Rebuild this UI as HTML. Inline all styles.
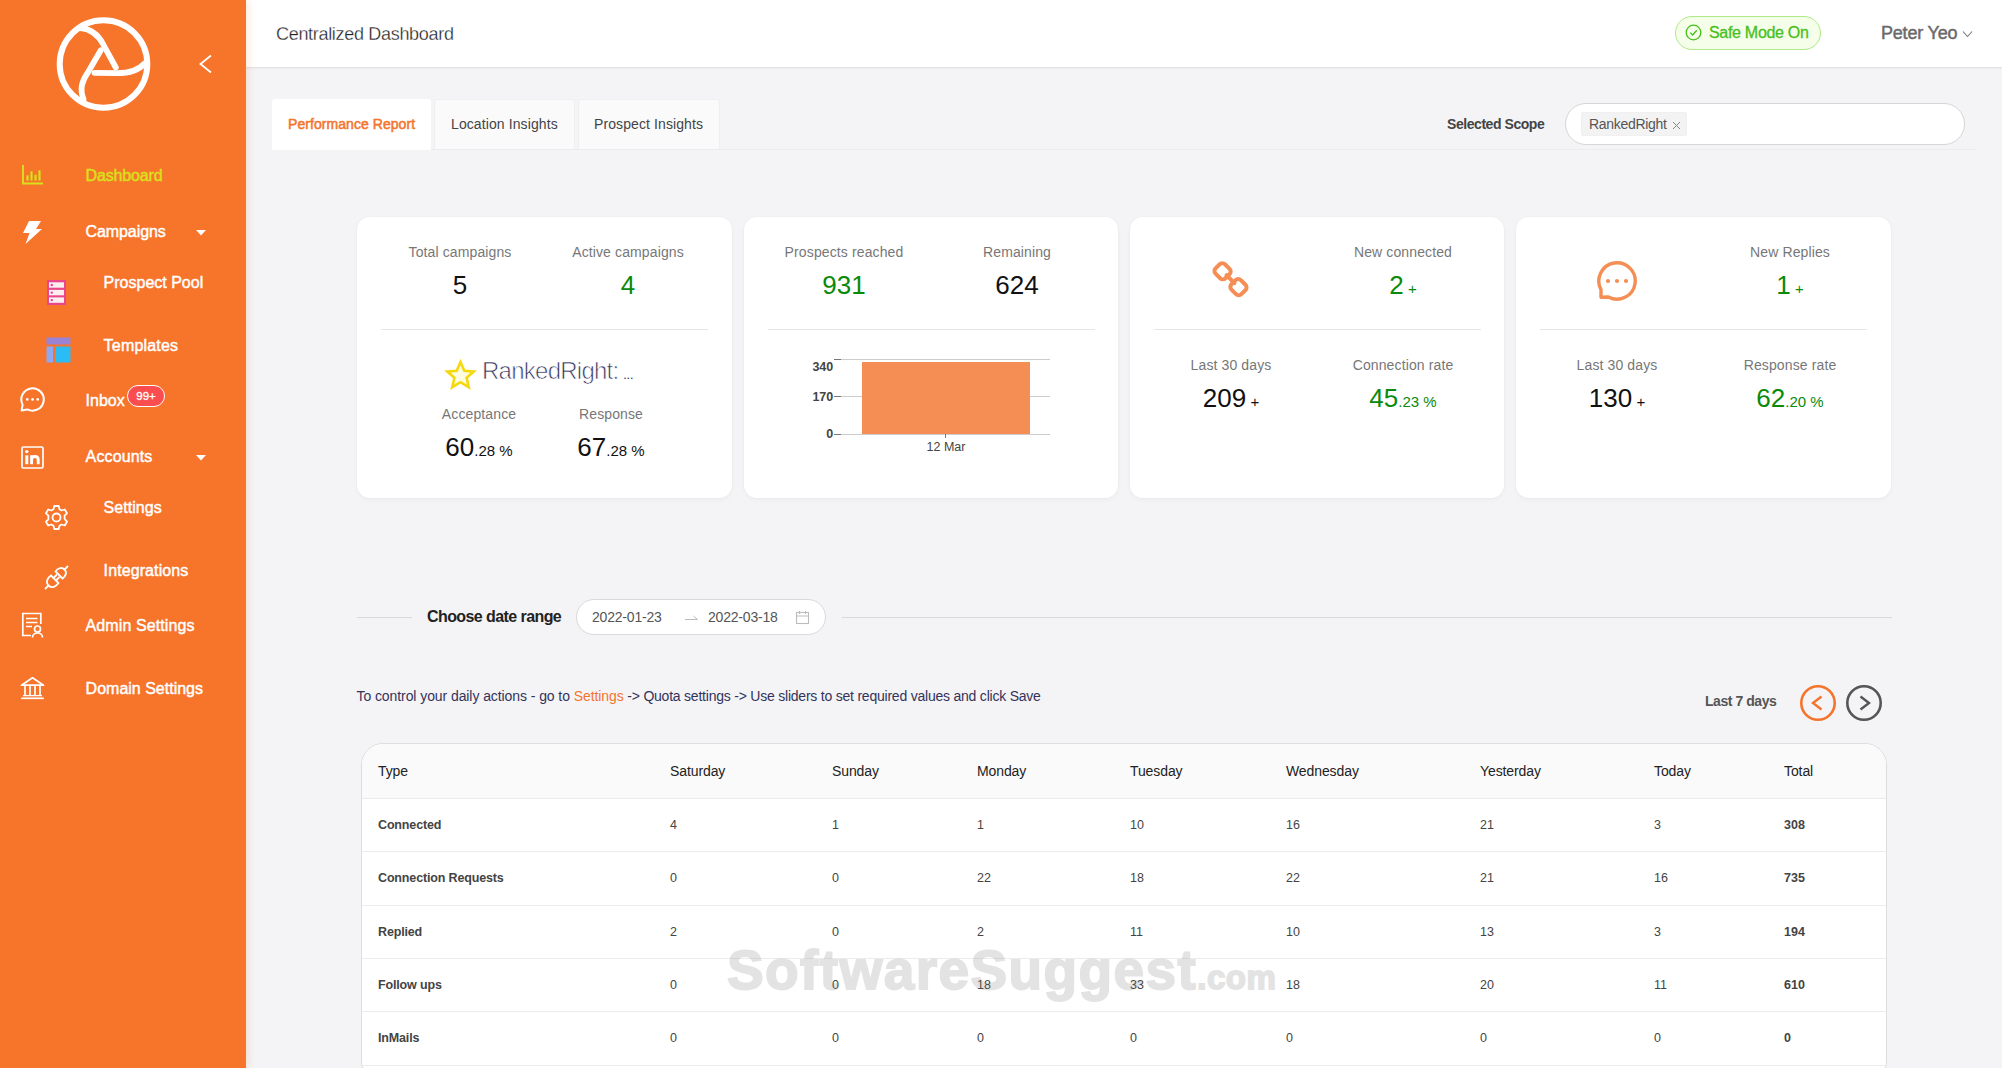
<!DOCTYPE html>
<html><head><meta charset="utf-8">
<style>
*{box-sizing:border-box;margin:0;padding:0}
html,body{width:2002px;height:1068px;overflow:hidden;background:#f4f4f7;font-family:"Liberation Sans",sans-serif;}
.abs{position:absolute}
#side{position:absolute;left:0;top:0;width:246px;height:1068px;background:#f7742b;box-shadow:2px 0 8px rgba(247,116,43,.18);z-index:5}
#top{position:absolute;left:246px;top:0;width:1756px;height:68px;background:#fff;border-bottom:1px solid #e2e2e4;box-shadow:0 1px 2px rgba(0,0,0,.04)}
.nav{position:absolute;margin-top:1px;margin-left:.6px;color:#fff;font-size:16px;white-space:nowrap;-webkit-text-stroke:.45px #fff;line-height:20px}
.t{position:absolute;white-space:nowrap;line-height:1}
.card{position:absolute;top:217px;height:281px;width:375px;background:#fff;border-radius:13px;box-shadow:0 0 0 1px rgba(0,0,0,.012),0 2px 5px rgba(0,0,0,.035)}
.lbl{position:absolute;color:#777;font-size:14px;letter-spacing:.12px;white-space:nowrap;transform:translateX(-50%);line-height:16px}
.num{position:absolute;font-size:26px;white-space:nowrap;transform:translateX(-50%);line-height:30px;color:#111}
.num small{font-size:15px}
.g{color:#0a8a0a}
.hr{position:absolute;height:1px;background:#e6e6e9}
#tbl{position:absolute;left:361px;top:743px;width:1526px;height:340px;background:#fff;border:1px solid #dddde0;border-radius:22px;overflow:hidden}
#tbl .head{position:absolute;left:0;top:0;width:100%;height:55px;background:#fafafa;border-bottom:1px solid #ebebeb}
.row{position:absolute;left:0;width:100%;height:1px;background:#ececec}
.c{position:absolute;margin-top:1px;font-size:12.5px;color:#444;white-space:nowrap;line-height:14px}
.h{position:absolute;letter-spacing:-.1px;font-size:14px;color:#222;white-space:nowrap;line-height:16px}
.b{font-weight:bold}
</style></head><body>
<div id="top"></div>
<!-- topbar content -->
<div class="t" style="left:276px;top:25px;font-size:18px;color:#222;letter-spacing:-.31px;-webkit-text-stroke:.3px #fff">Centralized Dashboard</div>
<div class="abs" style="left:1675px;top:16px;width:146px;height:34px;border-radius:17px;background:#f4fee8;border:1px solid #b0e98a"></div>
<svg class="abs" style="left:1685px;top:24px" width="17" height="17" viewBox="0 0 17 17" fill="none" stroke="#47bf1d" stroke-width="1.3"><circle cx="8.5" cy="8.5" r="7.3"/><path d="M5.2 8.6 L7.6 11 L11.8 6.2"/></svg>
<div class="t" style="left:1709px;top:25px;font-size:16px;color:#49c01c;-webkit-text-stroke:.3px #49c01c;letter-spacing:-.3px">Safe Mode On</div>
<div class="t" style="left:1881px;top:24px;font-size:18px;color:#6a6a6a;-webkit-text-stroke:.45px #6a6a6a;letter-spacing:-.2px">Peter Yeo</div>
<svg class="abs" style="left:1962px;top:30px" width="11" height="8" viewBox="0 0 11 8" fill="none" stroke="#777" stroke-width="1.1"><path d="M1 1.5 L5.5 6.5 L10 1.5"/></svg>

<!-- tabs -->
<div class="abs" style="left:272px;top:149px;width:1705px;height:1px;background:#ececef"></div>
<div class="abs" style="left:272px;top:99px;width:159px;height:51px;background:#fff;border-radius:3px 3px 0 0"></div>
<div class="abs" style="left:434px;top:99px;width:141px;height:50px;background:#fafafa;border:1px solid #efeff1;border-bottom:none;border-radius:3px 3px 0 0"></div>
<div class="abs" style="left:578px;top:99px;width:142px;height:50px;background:#fafafa;border:1px solid #efeff1;border-bottom:none;border-radius:3px 3px 0 0"></div>
<div class="t" style="left:288px;top:117px;font-size:14px;color:#f4742c;-webkit-text-stroke:.5px #f4742c;letter-spacing:.06px">Performance Report</div>
<div class="t" style="left:451px;top:117px;font-size:14px;color:#444;letter-spacing:.1px">Location Insights</div>
<div class="t" style="left:594px;top:117px;font-size:14px;color:#444;letter-spacing:.1px">Prospect Insights</div>

<!-- scope -->
<div class="t" style="left:1447px;top:117px;font-size:14px;font-weight:bold;color:#444;letter-spacing:-.44px">Selected Scope</div>
<div class="abs" style="left:1565px;top:103px;width:400px;height:42px;border-radius:21px;background:#fff;border:1px solid #d6d6d6"></div>
<div class="abs" style="left:1581px;top:112px;width:106px;height:24px;border-radius:2px;background:#f3f3f4;border:1px solid #f0f0f0"></div>
<div class="t" style="left:1589px;top:117px;font-size:14px;color:#555;letter-spacing:-.3px">RankedRight</div>
<svg class="abs" style="left:1672px;top:121px" width="9" height="9" viewBox="0 0 9 9" fill="none" stroke="#888" stroke-width="1"><path d="M1 1 L8 8 M8 1 L1 8"/></svg>

<!-- card 1 -->
<div class="card" style="left:357px"></div>
<div class="lbl" style="left:460px;top:244px">Total campaigns</div>
<div class="lbl" style="left:628px;top:244px">Active campaigns</div>
<div class="num" style="left:460px;top:270px">5</div>
<div class="num g" style="left:628px;top:270px">4</div>
<div class="hr" style="left:381px;top:329px;width:327px"></div>
<svg class="abs" style="left:443px;top:357px" width="35" height="35" viewBox="0 0 35 35" fill="#fffde0" stroke="#f6d80e" stroke-width="2.6" stroke-linejoin="miter"><path d="M17.5 5 L21.3 13.8 L30.8 14.6 L23.6 20.8 L25.8 30.2 L17.5 25.2 L9.2 30.2 L11.4 20.8 L4.2 14.6 L13.7 13.8 Z"/></svg>
<div class="t" style="left:482px;top:359px;font-size:24px;color:#34345c;letter-spacing:-.75px;-webkit-text-stroke:.7px #fff">RankedRight: <span style="font-size:12.5px;letter-spacing:-.2px;margin-left:-1px;-webkit-text-stroke:0;color:#2a2a50">...</span></div>
<div class="lbl" style="left:479px;top:406px">Acceptance</div>
<div class="lbl" style="left:611px;top:406px">Response</div>
<div class="num" style="left:479px;top:432px">60<small>.28 %</small></div>
<div class="num" style="left:611px;top:432px">67<small>.28 %</small></div>

<!-- card 2 -->
<div class="card" style="left:744px;width:374px"></div>
<div class="lbl" style="left:844px;top:244px">Prospects reached</div>
<div class="lbl" style="left:1017px;top:244px">Remaining</div>
<div class="num g" style="left:844px;top:270px">931</div>
<div class="num" style="left:1017px;top:270px">624</div>
<div class="hr" style="left:768px;top:329px;width:327px"></div>
<div class="abs" style="left:836px;top:359px;width:214px;height:1px;background:#ccc"></div>
<div class="abs" style="left:836px;top:396px;width:214px;height:1px;background:#ccc"></div>
<div class="abs" style="left:836px;top:434px;width:214px;height:1px;background:#ccc"></div>
<div class="abs" style="left:834px;top:359px;width:7px;height:1px;background:#777"></div>
<div class="abs" style="left:834px;top:396px;width:7px;height:1px;background:#777"></div>
<div class="abs" style="left:834px;top:434px;width:7px;height:1px;background:#777"></div>
<div class="abs" style="left:862px;top:362px;width:168px;height:72px;background:#f58e54"></div>
<div class="abs" style="left:945px;top:434px;width:1px;height:4px;background:#777"></div>
<div class="t b" style="left:793px;top:361px;width:40px;text-align:right;font-size:12.5px;color:#444;letter-spacing:-.1px">340</div>
<div class="t b" style="left:793px;top:391px;width:40px;text-align:right;font-size:12.5px;color:#444;letter-spacing:-.1px">170</div>
<div class="t b" style="left:793px;top:428px;width:40px;text-align:right;font-size:12.5px;color:#444;letter-spacing:-.1px">0</div>
<div class="t" style="left:906px;top:441px;width:80px;text-align:center;font-size:12.5px;color:#444">12 Mar</div>

<!-- card 3 -->
<div class="card" style="left:1130px;width:374px"></div>
<svg class="abs" style="left:1205px;top:254px" width="51" height="51" viewBox="-25.5 -25.5 51 51" fill="none" stroke="#f58e54" stroke-width="4" stroke-linecap="round"><g transform="translate(0,-.3) rotate(45)"><rect x="-18.24" y="-6.65" width="14" height="13.3" rx="3.75"/><rect x="4.24" y="-6.65" width="14" height="13.3" rx="3.75"/><path d="M-5.6 0 H5.6"/></g></svg>
<div class="lbl" style="left:1403px;top:244px">New connected</div>
<div class="num g" style="left:1403px;top:270px">2<small> +</small></div>
<div class="hr" style="left:1154px;top:329px;width:327px"></div>
<div class="lbl" style="left:1231px;top:357px">Last 30 days</div>
<div class="lbl" style="left:1403px;top:357px">Connection rate</div>
<div class="num" style="left:1231px;top:383px">209<small> +</small></div>
<div class="num g" style="left:1403px;top:383px">45<small>.23 %</small></div>

<!-- card 4 -->
<div class="card" style="left:1516px"></div>
<svg class="abs" style="left:1595px;top:260px" width="44" height="42" viewBox="0 0 44 42" fill="none" stroke="#f58e54" stroke-width="3.4" stroke-linejoin="round"><path d="M6 29.6 A18.2 18.2 0 1 1 13.4 37 L6 37.2 Z"/><circle cx="13" cy="21" r="2.1" fill="#f58e54" stroke="none"/><circle cx="22" cy="21" r="2.1" fill="#f58e54" stroke="none"/><circle cx="31" cy="21" r="2.1" fill="#f58e54" stroke="none"/></svg>
<div class="lbl" style="left:1790px;top:244px">New Replies</div>
<div class="num g" style="left:1790px;top:270px">1<small> +</small></div>
<div class="hr" style="left:1540px;top:329px;width:327px"></div>
<div class="lbl" style="left:1617px;top:357px">Last 30 days</div>
<div class="lbl" style="left:1790px;top:357px">Response rate</div>
<div class="num" style="left:1617px;top:383px">130<small> +</small></div>
<div class="num g" style="left:1790px;top:383px">62<small>.20 %</small></div>

<!-- date range -->
<div class="abs" style="left:357px;top:617px;width:55px;height:1px;background:#d9d9dc"></div>
<div class="abs" style="left:842px;top:617px;width:1050px;height:1px;background:#d9d9dc"></div>
<div class="t b" style="left:427px;top:609px;font-size:16px;color:#222;letter-spacing:-.58px">Choose date range</div>
<div class="abs" style="left:576px;top:599px;width:250px;height:36px;border-radius:18px;background:#fff;border:1px solid #d9d9d9"></div>
<div class="t" style="left:592px;top:610px;font-size:14px;color:#555;letter-spacing:-.2px">2022-01-23</div>
<div class="t" style="left:708px;top:610px;font-size:14px;color:#555;letter-spacing:-.2px">2022-03-18</div>
<svg class="abs" style="left:684px;top:613px" width="15" height="9" viewBox="0 0 15 9" fill="none" stroke="#bbb" stroke-width="1"><path d="M1 6.5 H13.5 L9.5 3"/></svg>
<svg class="abs" style="left:795px;top:610px" width="15" height="15" viewBox="0 0 15 15" fill="none" stroke="#bdbdbd" stroke-width="1.1"><rect x="1.5" y="2.5" width="12" height="11"/><path d="M1.5 6 H13.5 M4.5 1 V4 M10.5 1 V4"/></svg>

<!-- info line -->
<div class="t" style="left:356.5px;top:689px;font-size:14px;color:#33335a;letter-spacing:-.08px">To control your daily actions - go to <span style="color:#f4742c">Settings</span><span style="letter-spacing:-.22px"> -&gt; Quota settings -&gt; Use sliders to set required values and click Save</span></div>
<div class="t b" style="left:1705px;top:694px;font-size:14px;color:#555;letter-spacing:-.45px">Last 7 days</div>
<svg class="abs" style="left:1798px;top:683px" width="40" height="40" viewBox="0 0 40 40" fill="none" stroke="#f4742c" stroke-width="2.6"><circle cx="20" cy="20" r="16.7"/><path d="M23.5 13.5 L15 20 L23.5 26.5" stroke-width="2.4"/></svg>
<svg class="abs" style="left:1844px;top:683px" width="40" height="40" viewBox="0 0 40 40" fill="none" stroke="#555" stroke-width="2.6"><circle cx="20" cy="20" r="16.7"/><path d="M16.5 13.5 L25 20 L16.5 26.5" stroke-width="2.4"/></svg>
<div id="tbl"><div class="head"></div>
<div class="h" style="left:16px;top:19px">Type</div><div class="h" style="left:308px;top:19px">Saturday</div><div class="h" style="left:470px;top:19px">Sunday</div><div class="h" style="left:615px;top:19px">Monday</div><div class="h" style="left:768px;top:19px">Tuesday</div><div class="h" style="left:924px;top:19px">Wednesday</div><div class="h" style="left:1118px;top:19px">Yesterday</div><div class="h" style="left:1292px;top:19px">Today</div><div class="h" style="left:1422px;top:19px">Total</div>
<div class="c b" style="left:16px;top:73px;letter-spacing:-.15px">Connected</div><div class="c" style="left:308px;top:73px">4</div><div class="c" style="left:470px;top:73px">1</div><div class="c" style="left:615px;top:73px">1</div><div class="c" style="left:768px;top:73px">10</div><div class="c" style="left:924px;top:73px">16</div><div class="c" style="left:1118px;top:73px">21</div><div class="c" style="left:1292px;top:73px">3</div><div class="c b" style="left:1422px;top:73px">308</div><div class="row" style="top:107px"></div>
<div class="c b" style="left:16px;top:126px;letter-spacing:-.15px">Connection Requests</div><div class="c" style="left:308px;top:126px">0</div><div class="c" style="left:470px;top:126px">0</div><div class="c" style="left:615px;top:126px">22</div><div class="c" style="left:768px;top:126px">18</div><div class="c" style="left:924px;top:126px">22</div><div class="c" style="left:1118px;top:126px">21</div><div class="c" style="left:1292px;top:126px">16</div><div class="c b" style="left:1422px;top:126px">735</div><div class="row" style="top:161px"></div>
<div class="c b" style="left:16px;top:180px;letter-spacing:-.15px">Replied</div><div class="c" style="left:308px;top:180px">2</div><div class="c" style="left:470px;top:180px">0</div><div class="c" style="left:615px;top:180px">2</div><div class="c" style="left:768px;top:180px">11</div><div class="c" style="left:924px;top:180px">10</div><div class="c" style="left:1118px;top:180px">13</div><div class="c" style="left:1292px;top:180px">3</div><div class="c b" style="left:1422px;top:180px">194</div><div class="row" style="top:214px"></div>
<div class="c b" style="left:16px;top:233px;letter-spacing:-.15px">Follow ups</div><div class="c" style="left:308px;top:233px">0</div><div class="c" style="left:470px;top:233px">0</div><div class="c" style="left:615px;top:233px">18</div><div class="c" style="left:768px;top:233px">33</div><div class="c" style="left:924px;top:233px">18</div><div class="c" style="left:1118px;top:233px">20</div><div class="c" style="left:1292px;top:233px">11</div><div class="c b" style="left:1422px;top:233px">610</div><div class="row" style="top:267px"></div>
<div class="c b" style="left:16px;top:286px;letter-spacing:-.15px">InMails</div><div class="c" style="left:308px;top:286px">0</div><div class="c" style="left:470px;top:286px">0</div><div class="c" style="left:615px;top:286px">0</div><div class="c" style="left:768px;top:286px">0</div><div class="c" style="left:924px;top:286px">0</div><div class="c" style="left:1118px;top:286px">0</div><div class="c" style="left:1292px;top:286px">0</div><div class="c b" style="left:1422px;top:286px">0</div><div class="row" style="top:321px"></div>
</div>
<div class="abs" style="left:727px;top:938px;font-size:55px;font-weight:bold;color:#777;opacity:.2;letter-spacing:1.4px;white-space:nowrap;line-height:64px;-webkit-text-stroke:1.8px #777;z-index:3">SoftwareSuggest<span style="font-size:33px;letter-spacing:.5px">.com</span></div>


<div id="side">
<!-- logo -->
<svg class="abs" style="left:55px;top:16px" width="97" height="97" viewBox="0 0 97 97" fill="none" stroke="#fff" stroke-width="5.8" stroke-linecap="round" stroke-linejoin="round">
<circle cx="48.5" cy="48" r="43.8" stroke-width="6"/>
<path d="M25.5 12 C36.5 13 43.5 19.5 48 28 L60.8 51.5"/>
<path d="M89.5 47.5 C83 55 73 57.2 62 57.2 L39.5 56.9"/>
<path d="M28.5 83 C24 72 28 64 32.4 57.2 L45.8 34.2"/>
</svg>
<!-- collapse chevron -->
<svg class="abs" style="left:197px;top:53px" width="18" height="22" viewBox="0 0 18 22" fill="none" stroke="#fff" stroke-width="1.8"><path d="M14 2.5 L3.5 11 L14 19.5"/></svg>

<!-- dashboard -->
<svg class="abs" style="left:21px;top:164px" width="24" height="22" viewBox="0 0 24 22" fill="none" stroke="#d8e01c" stroke-width="1.9"><path d="M2 1 V19.5 H22"/><path d="M6.5 11.3 V16.5 M10.5 7.3 V16.5 M14.5 10.8 V16.5 M18.5 6.3 V16.5" stroke-width="2.2"/></svg>
<div class="nav" style="left:85px;top:165px;color:#d8e01c;-webkit-text-stroke:.45px #d8e01c;letter-spacing:-0.15px">Dashboard</div>

<!-- campaigns -->
<svg class="abs" style="left:21px;top:220px" width="22" height="25" viewBox="0 0 22 25" fill="#fff"><path d="M8 1 H20 L15 9 H21 L4.5 24 L8.5 13 H2 Z"/></svg>
<div class="nav" style="left:85px;top:221px;letter-spacing:-0.1px">Campaigns</div>
<svg class="abs" style="left:196px;top:230px" width="10" height="6" viewBox="0 0 10 6" fill="#fff"><path d="M0 0 H10 L5 5.5 Z"/></svg>

<!-- prospect pool -->
<svg class="abs" style="left:47px;top:280px" width="20" height="25" viewBox="0 0 20 25"><rect x="0" y="0" width="19" height="25" fill="#e8478b"/><rect x="2" y="2.3" width="15" height="5.4" fill="#fdeef0"/><rect x="2" y="9.9" width="15" height="5.4" fill="#fdeef0"/><rect x="2" y="17.4" width="15" height="5.4" fill="#fdeef0"/><circle cx="4.8" cy="5" r="1.2" fill="#e8478b"/><circle cx="4.8" cy="12.6" r="1.2" fill="#e8478b"/><circle cx="4.8" cy="20.1" r="1.2" fill="#e8478b"/></svg>
<div class="nav" style="left:103px;top:272px">Prospect Pool</div>

<!-- templates -->
<svg class="abs" style="left:46px;top:337px" width="25" height="26" viewBox="0 0 25 26"><rect x="0.5" y="0.5" width="24" height="7" fill="#9a83d6"/><rect x="0.5" y="9.5" width="6.5" height="16" fill="#8fa8f0"/><rect x="9" y="9.5" width="15.5" height="16" fill="#2bbcf5"/></svg>
<div class="nav" style="left:103px;top:335px;letter-spacing:0.2px">Templates</div>

<!-- inbox -->
<svg class="abs" style="left:19px;top:386px" width="27" height="27" viewBox="0 0 27 27" fill="none" stroke="#fff" stroke-width="2" stroke-linejoin="round"><path d="M3.6 18.6 A11.2 11.2 0 1 1 8.4 23.4 L2.6 24.6 Z"/><circle cx="8.3" cy="13.4" r="1.35" fill="#fff" stroke="none"/><circle cx="13.5" cy="13.4" r="1.35" fill="#fff" stroke="none"/><circle cx="18.7" cy="13.4" r="1.35" fill="#fff" stroke="none"/></svg>
<div class="nav" style="left:85px;top:390px">Inbox</div>
<div class="abs" style="left:127px;top:385px;width:38px;height:22px;border-radius:11px;background:#fa4d4f;border:1px solid #fff;color:#fff;font-size:11.5px;line-height:20px;text-align:center;-webkit-text-stroke:.3px #fff">99+</div>

<!-- accounts -->
<svg class="abs" style="left:21px;top:446px" width="23" height="23" viewBox="0 0 23 23" fill="none" stroke="#fff" stroke-width="1.7"><rect x="1" y="1" width="21" height="21" rx="1.5"/><path d="M5.8 9.3 V18.2" stroke-width="3"/><circle cx="5.8" cy="5.6" r="1.7" fill="#fff" stroke="none"/><path d="M10.6 9.3 V18.2 M10.6 13.6 C10.6 9.4 17.2 9.4 17.2 13.6 V18.2" stroke-width="2.9"/></svg>
<div class="nav" style="left:85px;top:446px;letter-spacing:0.12px">Accounts</div>
<svg class="abs" style="left:196px;top:455px" width="10" height="6" viewBox="0 0 10 6" fill="#fff"><path d="M0 0 H10 L5 5.5 Z"/></svg>

<!-- settings -->
<svg class="abs" style="left:44px;top:504px" width="25" height="27" viewBox="0 0 25 27" fill="none" stroke="#fff" stroke-width="1.8" stroke-linejoin="round"><circle cx="12.5" cy="13.5" r="4"/><path d="M10.3 2 H14.7 L15.5 5.3 L17.6 6.5 L20.8 5.5 L23 9.3 L20.6 11.6 V14.9 L23 17.7 L20.8 21.5 L17.6 20.5 L15.5 21.7 L14.7 25 H10.3 L9.5 21.7 L7.4 20.5 L4.2 21.5 L2 17.7 L4.4 15.4 V11.6 L2 9.3 L4.2 5.5 L7.4 6.5 L9.5 5.3 Z"/></svg>
<div class="nav" style="left:103px;top:497px;letter-spacing:0.05px">Settings</div>

<!-- integrations -->
<svg class="abs" style="left:44px;top:565px" width="25" height="25" viewBox="0 0 25 25" fill="none" stroke="#fff" stroke-width="1.8" stroke-linecap="round"><path d="M1.5 23.5 L4.5 20.5"/><path d="M20.5 4.5 L23.5 1.5"/><path d="M4.5 20.5 C1 17 4 12.5 7 10.5 L14.5 18 C12 21.5 8 24 4.5 20.5 Z" transform="translate(0,0)"/><path d="M20.5 4.5 C17.5 1.5 13.5 3.5 11.5 6.5 L18.5 13.5 C21.5 11.5 23.5 7.5 20.5 4.5 Z"/><path d="M9.5 13 L12.5 10 M12 15.5 L15 12.5"/></svg>
<div class="nav" style="left:103px;top:560px;letter-spacing:0.1px">Integrations</div>

<!-- admin settings -->
<svg class="abs" style="left:21px;top:612px" width="24" height="26" viewBox="0 0 24 26" fill="none" stroke="#fff" stroke-width="1.7"><path d="M10 23.5 H1.8 V1.5 H19.8 V12"/><path d="M5 6.5 H16.5 M5 10.5 H16.5 M5 14.5 H11"/><circle cx="16.5" cy="17" r="3"/><path d="M11.5 25.5 C11.5 19.5 21.5 19.5 21.5 25.5"/></svg>
<div class="nav" style="left:85px;top:615px;letter-spacing:0.1px">Admin Settings</div>

<!-- domain settings -->
<svg class="abs" style="left:20px;top:676px" width="25" height="25" viewBox="0 0 25 25" fill="none" stroke="#fff" stroke-width="1.7" stroke-linejoin="round"><path d="M1.5 9.2 L12.5 1.8 L23.5 9.2 Z"/><path d="M5 10 V19.5 M10 10 V19.5 M15 10 V19.5 M20 10 V19.5"/><path d="M3 19.6 H22" stroke-width="1.3"/><path d="M1.2 22.3 H23.8"/></svg>
<div class="nav" style="left:85px;top:678px">Domain Settings</div>
</div>
</body></html>
